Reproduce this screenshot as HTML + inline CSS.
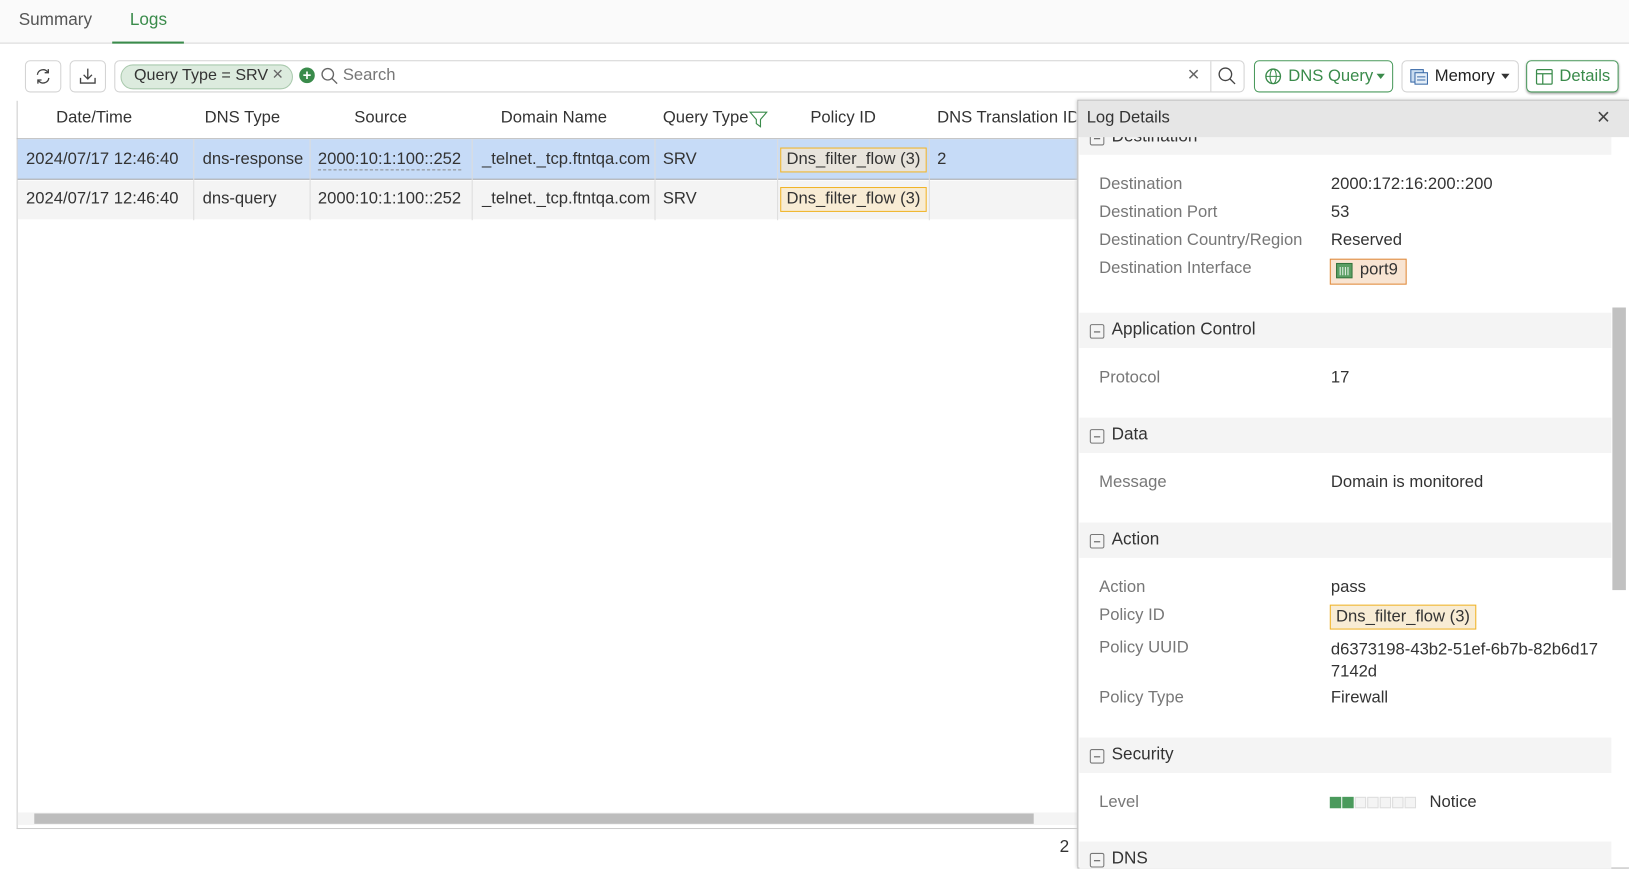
<!DOCTYPE html>
<html><head><meta charset="utf-8"><style>
*{box-sizing:border-box;margin:0;padding:0}
html,body{width:1629px;height:866px;overflow:hidden;background:#fff}
#w{position:absolute;left:0;top:0;width:1568px;height:834px;transform:scale(1.0389);transform-origin:0 0;font-family:"Liberation Sans",sans-serif;font-size:16px;color:#333}
.a{position:absolute;white-space:nowrap}
.btn{position:absolute;top:58px;height:31px;border:1px solid #d3d3d3;border-radius:5px;background:#fff}
.g{border-color:#4a9a5c;color:#3a8b4b}
.th{position:absolute;top:105px;color:#333;white-space:nowrap}
.cell{position:absolute;line-height:18px;white-space:nowrap}
.vl{position:absolute;top:134px;height:78px;width:1px;background:#ddd}
.badge{position:absolute;border:1px solid #f0b429;background:#f8ecd4;padding:0 5px;height:24px;line-height:22px;white-space:nowrap}
.sh{position:absolute;left:1039px;width:512px;height:34px;background:#f4f4f4}
.sh span{position:absolute;left:31px;top:7px;font-size:16.5px;color:#333}
.sh i{position:absolute;left:10px;top:11px;width:14px;height:14px;border:1px solid #777;border-radius:2px}
.sh i:after{content:"";position:absolute;left:3px;top:5.5px;width:6px;height:1.3px;background:#555}
.lb{position:absolute;left:1058px;color:#777;white-space:nowrap}
.vv{position:absolute;left:1281px;color:#333;white-space:nowrap}
</style></head><body><div id="w">
<div class="a" style="left:0;top:0;width:1568px;height:42px;background:#fafafa;border-bottom:1px solid #d8d8d8"></div>
<div class="a" style="left:18px;top:10px;color:#555;font-size:16.5px">Summary</div>
<div class="a" style="left:125px;top:10px;color:#3a8b4b;font-size:16.5px">Logs</div>
<div class="a" style="left:108px;top:40px;width:69px;height:2px;background:#3a8b4b"></div>

<div class="btn" style="left:24px;width:35px"><svg width="33" height="29" viewBox="0 0 33 29"><path d="M11 13a5.5 5.5 0 0 1 10-2.5M22 16a5.5 5.5 0 0 1-10 2.5" fill="none" stroke="#444" stroke-width="1.3"/><path d="M21.5 7.5v3.5h-3.5M11.5 21.5v-3.5h3.5" fill="none" stroke="#444" stroke-width="1.3"/></svg></div>
<div class="btn" style="left:67px;width:35px"><svg width="33" height="29" viewBox="0 0 33 29"><path d="M16.5 7v10M12.5 13l4 4 4-4M9.5 16v5h14v-5" fill="none" stroke="#444" stroke-width="1.3"/></svg></div>
<div class="btn" style="left:110px;width:1088px"></div>
<div class="a" style="left:116px;top:62px;width:166px;height:24px;border:1px solid #a9c9ad;background:#dcebde;border-radius:12px"></div>
<div class="a" style="left:129px;top:64px;color:#333;font-size:15.5px">Query Type = SRV</div>
<div class="a" style="left:262px;top:61px;color:#666;font-size:18px">×</div>
<div class="a" style="left:288px;top:65px;width:15px;height:15px;border-radius:50%;background:#3a8b4b;color:#fff;font-size:14px;line-height:15px;text-align:center;font-weight:bold">+</div>
<svg class="a" style="left:308px;top:64px" width="18" height="18"><circle cx="7.5" cy="7.5" r="5.5" fill="none" stroke="#666" stroke-width="1.3"/><path d="M11.5 11.5l5 5" stroke="#666" stroke-width="1.3"/></svg>
<div class="a" style="left:330px;top:64px;color:#777;font-size:16px">Search</div>
<div class="a" style="left:1143px;top:61px;color:#666;font-size:20px">×</div>
<div class="a" style="left:1165px;top:59px;width:1px;height:29px;background:#d3d3d3"></div>
<svg class="a" style="left:1172px;top:64px" width="18" height="18"><circle cx="7.5" cy="7.5" r="6" fill="none" stroke="#444" stroke-width="1.3"/><path d="M11.8 11.8l5 5" stroke="#444" stroke-width="1.3"/></svg>
<div class="btn g" style="left:1207px;width:134px"><svg class="a" style="left:9px;top:6px" width="17" height="17"><circle cx="8.5" cy="8.5" r="7" fill="#fff" stroke="#3a8b4b" stroke-width="1.3"/><ellipse cx="8.5" cy="8.5" rx="3" ry="7" fill="none" stroke="#3a8b4b"/><path d="M1.5 8.5h14" stroke="#3a8b4b"/></svg><span class="a" style="left:32px;top:6px;font-size:16px">DNS Query</span><span class="a" style="left:117px;top:12px;border:4px solid transparent;border-top:5px solid #3a8b4b"></span></div>
<div class="btn" style="left:1349px;width:113px"><svg class="a" style="left:7px;top:7px" width="18" height="16"><rect x="1" y="1" width="12" height="12" fill="#c9dcf0" stroke="#3a6aa8"/><rect x="5" y="4" width="12" height="11" fill="#e4eef8" stroke="#3a6aa8"/><path d="M7 8h8M7 11h8" stroke="#3a6aa8"/></svg><span class="a" style="left:31px;top:6px;font-size:16px;color:#222">Memory</span><span class="a" style="left:95px;top:12px;border:4px solid transparent;border-top:5px solid #333"></span></div>
<div class="btn g" style="left:1469px;width:89px;box-shadow:0 1px 2px #aaa"><svg class="a" style="left:8px;top:7px" width="17" height="16"><rect x="1" y="1" width="15" height="14" fill="none" stroke="#3a8b4b" stroke-width="1.2" rx="1"/><path d="M1 5h15M7 5v10" stroke="#3a8b4b" stroke-width="1.2"/></svg><span class="a" style="left:31px;top:6px;font-size:16px">Details</span></div>

<div class="a" style="left:16px;top:97px;width:1022px;height:701px;border:1px solid #ccc;border-top:none;border-right:none"></div>
<div class="a" style="left:16px;top:133px;width:1022px;height:1px;background:#bbb"></div>
<div class="th" style="left:54px">Date/Time</div>
<div class="th" style="left:197px">DNS Type</div>
<div class="th" style="left:341px">Source</div>
<div class="th" style="left:482px">Domain Name</div>
<div class="th" style="left:638px">Query Type</div>
<svg class="a" style="left:721px;top:107px" width="18" height="16"><path d="M1 1h16l-6 7v7l-4-3v-4z" fill="none" stroke="#3a8b4b" stroke-width="1.1"/></svg>
<div class="th" style="left:780px">Policy ID</div>
<div class="th" style="left:902px;width:134px;overflow:hidden">DNS Translation ID</div>
<div class="a" style="left:17px;top:134px;width:1021px;height:39px;background:#c6dbf7;border-bottom:1px solid #aaa"></div>
<div class="a" style="left:17px;top:174px;width:1021px;height:37px;background:#f4f4f4"></div>
<div class="vl" style="left:186px"></div><div class="vl" style="left:298px"></div><div class="vl" style="left:454px"></div><div class="vl" style="left:630px"></div><div class="vl" style="left:748px"></div><div class="vl" style="left:894px"></div>
<div class="cell" style="left:25px;top:145px">2024/07/17 12:46:40</div>
<div class="cell" style="left:195px;top:145px">dns-response</div>
<div class="cell" style="left:306px;top:145px;border-bottom:1px dashed #888">2000:10:1:100::252</div>
<div class="cell" style="left:464px;top:145px">_telnet._tcp.ftntqa.com</div>
<div class="cell" style="left:638px;top:145px">SRV</div>
<div class="badge" style="left:751px;top:142px;background:#e8e4dc">Dns_filter_flow (3)</div>
<div class="cell" style="left:902px;top:145px">2</div>
<div class="cell" style="left:25px;top:183px">2024/07/17 12:46:40</div>
<div class="cell" style="left:195px;top:183px">dns-query</div>
<div class="cell" style="left:306px;top:183px">2000:10:1:100::252</div>
<div class="cell" style="left:464px;top:183px">_telnet._tcp.ftntqa.com</div>
<div class="cell" style="left:638px;top:183px">SRV</div>
<div class="badge" style="left:751px;top:180px">Dns_filter_flow (3)</div>
<div class="a" style="left:17px;top:782px;width:1021px;height:12px;background:#f4f4f4"></div>
<div class="a" style="left:33px;top:783px;width:962px;height:10px;background:#bdbdbd"></div>
<div class="a" style="left:1020px;top:806px;font-size:16.5px">2</div>

<div class="a" style="left:1037px;top:96px;width:532px;height:740px;background:#fff;border:1px solid #bbb;box-shadow:-1px 0 3px #ccc"></div>
<div class="sh" style="top:115px"><i></i><span>Destination</span></div>
<div class="a" style="left:1038px;top:97px;width:530px;height:35px;background:#e6e6e6"></div>
<div class="a" style="left:1046px;top:105px;font-size:16px;color:#333">Log Details</div>
<div class="a" style="left:1537px;top:100px;font-size:22px;color:#444">×</div>
<div class="a" style="left:1552px;top:296px;width:13px;height:272px;background:#c1c1c1"></div>
<div class="lb" style="top:169px">Destination</div><div class="vv" style="top:169px">2000:172:16:200::200</div>
<div class="lb" style="top:196px">Destination Port</div><div class="vv" style="top:196px">53</div>
<div class="lb" style="top:223px">Destination Country/Region</div><div class="vv" style="top:223px">Reserved</div>
<div class="lb" style="top:250px">Destination Interface</div>
<div class="a" style="left:1280px;top:249px;width:74px;height:25px;border:1px solid #e08a3c;background:#f8e4d2"></div>
<svg class="a" style="left:1286px;top:253px" width="16" height="15"><rect x=".5" y=".5" width="15" height="14" fill="#5a9e64" stroke="#2e6e38"/><path d="M4 4v8M6.5 4v8M9 4v8M11.5 4v8" stroke="#e8f4ea"/></svg>
<div class="vv" style="left:1309px;top:251px">port9</div>
<div class="sh" style="top:301px"><i></i><span>Application Control</span></div>
<div class="lb" style="top:355px">Protocol</div><div class="vv" style="top:355px">17</div>
<div class="sh" style="top:402px"><i></i><span>Data</span></div>
<div class="lb" style="top:456px">Message</div><div class="vv" style="top:456px">Domain is monitored</div>
<div class="sh" style="top:503px"><i></i><span>Action</span></div>
<div class="lb" style="top:557px">Action</div><div class="vv" style="top:557px">pass</div>
<div class="lb" style="top:584px">Policy ID</div>
<div class="badge" style="left:1280px;top:582px">Dns_filter_flow (3)</div>
<div class="lb" style="top:615px">Policy UUID</div><div class="vv" style="top:615px;line-height:21px">d6373198-43b2-51ef-6b7b-82b6d17<br>7142d</div>
<div class="lb" style="top:663px">Policy Type</div><div class="vv" style="top:663px">Firewall</div>
<div class="sh" style="top:710px"><i></i><span>Security</span></div>
<div class="lb" style="top:764px">Level</div>
<div class="a" style="left:1280px;top:767px;display:flex;gap:1px">
<b style="width:11px;height:11px;background:#4a9a5c"></b><b style="width:11px;height:11px;background:#4a9a5c"></b><b style="width:11px;height:11px;background:#f4f4f4;border:1px solid #ddd"></b><b style="width:11px;height:11px;background:#f4f4f4;border:1px solid #ddd"></b><b style="width:11px;height:11px;background:#f4f4f4;border:1px solid #ddd"></b><b style="width:11px;height:11px;background:#f4f4f4;border:1px solid #ddd"></b><b style="width:11px;height:11px;background:#f4f4f4;border:1px solid #ddd"></b></div>
<div class="vv" style="left:1376px;top:764px">Notice</div>
<div class="sh" style="top:810px;height:26px"><i></i><span>DNS</span></div>
</div></body></html>
